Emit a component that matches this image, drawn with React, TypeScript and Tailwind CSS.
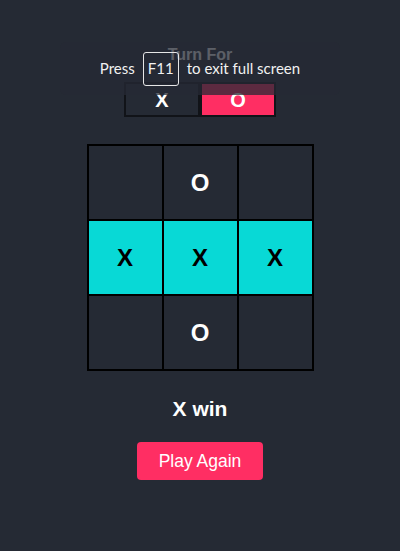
const BOARD = ['', 'O', '', 'X', 'X', 'X', '', 'O', ''];
const WIN_LINE = [3, 4, 5];

function Cell({ value, win }: { value: string; win: boolean }) {
  return (
    <div
      className={`flex h-[73px] w-[73px] items-center justify-center text-[24px] font-bold ${
        win ? 'bg-[#08d9d6] text-black' : 'bg-[#252a34] text-white'
      }`}
    >
      {value}
    </div>
  );
}

export default function App() {
  return (
    <div
      className="relative min-h-[551px] w-full bg-[#252a34] text-white"
      style={{ fontFamily: '"Liberation Sans", Arial, sans-serif' }}
    >
      <div className="flex flex-col items-center pt-[43px]">
        <h2 className="text-[16px] font-bold leading-6">Turn For</h2>

        <div className="mt-[15px] flex">
          <div className="flex h-[35px] w-[76px] items-center justify-center border-2 border-[#111318] text-[20px] font-bold">
            X
          </div>
          <div className="flex h-[35px] w-[76px] items-center justify-center border-2 border-[#111318] bg-[#ff2e63] text-[20px] font-bold">
            O
          </div>
        </div>

        <div className="mt-[27px] grid grid-cols-3 gap-[2px] bg-black p-[2px]">
          {BOARD.map((v, i) => (
            <Cell key={i} value={v} win={WIN_LINE.includes(i)} />
          ))}
        </div>

        <p className="mt-[24px] text-[21px] font-bold leading-7">X win</p>

        <button className="mt-[19px] h-[38px] w-[126px] rounded bg-[#ff2e63] text-[17.5px] text-white">
          Play Again
        </button>
      </div>

      {/* fullscreen notice */}
      <div
        className="absolute left-[60px] top-[42px] flex h-[53px] w-[280px] items-center justify-center gap-[8px] rounded-md bg-[#252a34]/75 text-[15px] text-[#f1f1f1]"
        style={{ fontFamily: 'Lato, "Noto Sans", sans-serif' }}
      >
        <span>Press</span>
        <span className="flex h-[34px] w-[36px] items-center justify-center rounded-[3px] border border-[#e6e6e6]">
          F11
        </span>
        <span>to exit full screen</span>
      </div>
    </div>
  );
}
